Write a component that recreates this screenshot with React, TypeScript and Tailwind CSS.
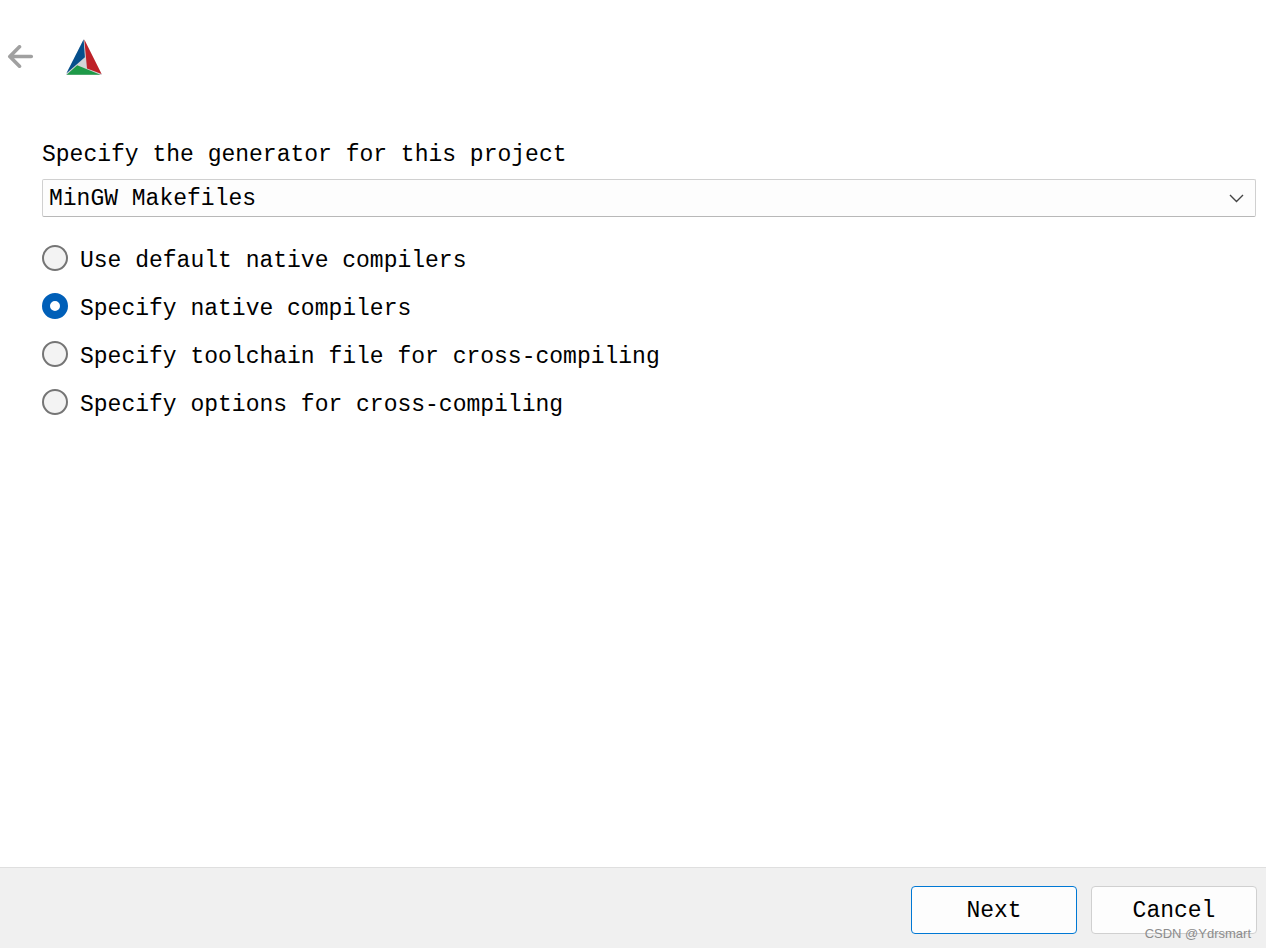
import { useState } from 'react';

interface CompilerOption {
  id: string;
  label: string;
}

const generators: string[] = ['MinGW Makefiles', 'Unix Makefiles', 'NMake Makefiles', 'Ninja'];

const compilerOptions: CompilerOption[] = [
  { id: 'default', label: 'Use default native compilers' },
  { id: 'native', label: 'Specify native compilers' },
  { id: 'toolchain', label: 'Specify toolchain file for cross-compiling' },
  { id: 'cross', label: 'Specify options for cross-compiling' },
];

function BackArrow() {
  return (
    <svg
      className="h-6 w-7"
      viewBox="0 0 28 24"
      fill="none"
      stroke="#a0a0a0"
      strokeWidth="3.6"
      strokeLinecap="round"
      strokeLinejoin="round"
    >
      <path d="M13.5 1.8 L3.8 11.5 L13.5 21.2 M4 11.5 H25.3" />
    </svg>
  );
}

function CMakeLogo() {
  return (
    <svg className="h-9 w-9" viewBox="0 0 36 36" role="img" aria-label="CMake">
      <path d="M17.8 0 L36 36 L0 36 Z" fill="#d3d4d6" />
      <path d="M17.6 0.6 L18.9 18.2 L0.3 34.6 Z" fill="#064f8c" />
      <path d="M18.3 0.6 L35.6 35 L21 29.6 Z" fill="#be2128" />
      <path d="M11.2 26.2 L34.4 35.8 L0.6 35.8 Z" fill="#1e9a48" />
    </svg>
  );
}

export default function App() {
  const [generator, setGenerator] = useState(generators[0]);
  const [selected, setSelected] = useState('native');

  return (
    <div className="relative flex min-h-screen flex-col bg-white font-['Liberation_Mono',monospace] text-[23px] leading-8 text-black">
      <header className="flex items-center gap-8 px-1.5 pt-[39px]">
        <button type="button" aria-label="Back">
          <BackArrow />
        </button>
        <CMakeLogo />
      </header>

      <main className="flex-1 pt-16 pr-2.5 pb-8 pl-[42px]">
        <label htmlFor="generator" className="block">
          Specify the generator for this project
        </label>
        <div className="relative mt-2">
          <select
            id="generator"
            value={generator}
            onChange={(e) => setGenerator(e.target.value)}
            className="block h-[38px] w-full appearance-none rounded-xs border border-[#d0d0d0] border-b-[#b8b8b8] bg-[#fdfdfd] pt-0.5 pr-10 pl-1.5"
          >
            {generators.map((name) => (
              <option key={name}>{name}</option>
            ))}
          </select>
          <svg
            className="pointer-events-none absolute top-3 right-3 h-4 w-4"
            viewBox="0 0 16 16"
            fill="none"
            stroke="#444"
            strokeWidth="1.4"
          >
            <path d="M2 4 L8.5 10.5 L15 4" />
          </svg>
        </div>

        <div role="radiogroup" aria-label="Compilers" className="mt-[26px] flex flex-col gap-3.5">
          {compilerOptions.map((option) => (
            <label key={option.id} className="flex items-start gap-3">
              <input
                type="radio"
                name="compilers"
                value={option.id}
                checked={selected === option.id}
                onChange={() => setSelected(option.id)}
                className="mt-0.5 size-[26px] shrink-0 appearance-none rounded-full border-2 border-[#757575] bg-[#f3f3f3] checked:border-8 checked:border-[#005fb8] checked:bg-white"
              />
              <span className="pt-0.5">{option.label}</span>
            </label>
          ))}
        </div>
      </main>

      <footer className="flex justify-end gap-3.5 border-t border-[#dfdfdf] bg-[#f0f0f0] pt-[18px] pr-[9px] pb-3.5">
        <button
          type="button"
          className="h-12 w-[166px] rounded-sm border border-[#0078d4] bg-[#fdfdfd] pt-0.5"
        >
          Next
        </button>
        <button
          type="button"
          className="h-12 w-[166px] rounded-sm border border-[#d0d0d0] bg-[#fdfdfd] pt-0.5"
        >
          Cancel
        </button>
      </footer>

      {/* Watermark over the corner of the dialog */}
      <span className="pointer-events-none absolute right-[15px] bottom-1.5 font-['Liberation_Sans',sans-serif] text-[13px] leading-4 text-[#8c8c8c]">
        CSDN @Ydrsmart
      </span>
    </div>
  );
}
